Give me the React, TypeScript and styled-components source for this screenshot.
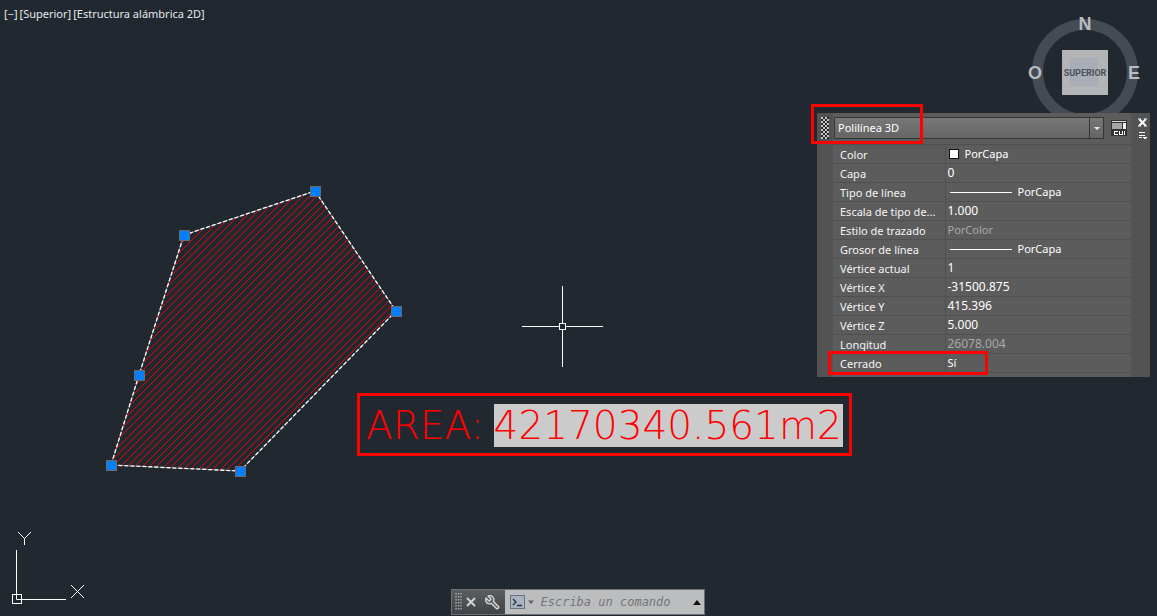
import React from "react";
import styled, { createGlobalStyle } from "styled-components";

const GlobalStyle = createGlobalStyle`
  * { box-sizing: border-box; }
  body { margin: 0; background: #212830; }
`;

const Workspace = styled.main`
  position: relative;
  min-height: 100vh;
  overflow: hidden;
  background: #212830;
  color: #f2f2f2;
  font-family: "Noto Sans", "Open Sans", sans-serif;
  font-size: 11px;
  line-height: 16px;
`;

const ViewportControls = styled.nav`
  display: flex;
  gap: 2px;
  padding: 6px 4px;
`;

const ViewportButton = styled.button`
  padding: 0;
  border: 0;
  background: none;
  color: #e6e8ea;
  font: inherit;
`;

const Drawing = styled.svg<{ $left: number; $top: number }>`
  position: absolute;
  left: ${(p) => p.$left}px;
  top: ${(p) => p.$top}px;
`;

const Ucs = styled.svg`
  position: absolute;
  left: 8px;
  bottom: 8px;
`;

const ViewCube = styled.svg`
  position: absolute;
  right: 15px;
  top: 12px;
  font-family: "Liberation Sans", sans-serif;
  font-weight: 700;
`;

const AreaNote = styled.p`
  position: absolute;
  left: 357px;
  top: 393px;
  display: flex;
  gap: 10px;
  margin: 0;
  padding: 8px 6px 6px;
  border: 3px solid #ff0000;
  color: #ff0000;
  font-family: "DejaVu Sans Light", "DejaVu Sans ExtraLight", Inter, sans-serif;
  font-size: 39px;
  font-weight: 200;
  line-height: 43px;
`;

const AreaField = styled.span`
  min-width: 349px;
  background: #cbcbcb;
`;

const Palette = styled.section`
  position: absolute;
  right: 7px;
  top: 113px;
  display: grid;
  grid-template-columns: 16px 298px 19px;
  background: #535353;
`;

const Grip = styled.div`
  display: flex;
  justify-content: center;
  padding-top: 4px;
`;

const PaletteBody = styled.div`
  padding-bottom: 4px;
  background: #5c5c5c;
`;

const PaletteHeader = styled.header`
  display: flex;
  align-items: center;
  gap: 7px;
  height: 31px;
  padding: 0 3px 2px 1px;
`;

const TypePicker = styled.div`
  position: relative;
  display: flex;
  width: 270px;
  height: 22px;
  border: 1px solid #363636;
  background: linear-gradient(#777777, #656565);

  svg {
    position: absolute;
    right: 0;
    top: 0;
    pointer-events: none;
  }
`;

const TypeSelect = styled.select`
  flex: 1;
  padding: 0 3px;
  border: 0;
  appearance: none;
  background: none;
  color: #ffffff;
  font: inherit;
`;

const IconButton = styled.button`
  display: flex;
  padding: 0;
  border: 0;
  background: none;
`;

const SideControls = styled.div`
  display: flex;
  flex-direction: column;
  align-items: center;
  gap: 4px;
  padding: 5px 0 0 3px;
`;

const PropertyTable = styled.table`
  width: 100%;
  border-collapse: collapse;
  table-layout: fixed;
  border-top: 1px solid #4f4f4f;
`;

const PropertyName = styled.th`
  width: 112px;
  height: 19px;
  padding: 2px 3px 0 7px;
  border-right: 1px solid #505050;
  border-bottom: 1px solid #505050;
  overflow: hidden;
  text-overflow: ellipsis;
  white-space: nowrap;
  text-align: left;
  font-weight: 400;
  color: #f4f4f4;
`;

const PropertyValue = styled.td<{ $muted?: boolean; $numeric?: boolean }>`
  height: 19px;
  padding: 0 0 0 2px;
  border-bottom: 1px solid #505050;
  color: ${(p) => (p.$muted ? "#a9a9a9" : "#ffffff")};
  font-size: ${(p) => (p.$numeric ? 12 : 11)}px;
`;

const ValueContent = styled.span`
  display: flex;
  align-items: center;
  gap: 6px;
`;

const Swatch = styled.span`
  width: 10px;
  height: 10px;
  margin-left: 1px;
  border: 1px solid #111111;
  background: #ffffff;
`;

const LineSample = styled.span`
  width: 62px;
  height: 1px;
  margin-left: 2px;
  background: #ffffff;
`;

const Highlight = styled.div<{ $left: number; $top: number; $width: number; $height: number }>`
  position: absolute;
  left: ${(p) => p.$left}px;
  top: ${(p) => p.$top}px;
  width: ${(p) => p.$width}px;
  height: ${(p) => p.$height}px;
  border: 3px solid #ff0000;
  pointer-events: none;
`;

const CommandDock = styled.footer`
  position: absolute;
  left: 0;
  right: 0;
  bottom: 1px;
  display: flex;
  justify-content: center;
  padding-right: 2px;
`;

const CommandBar = styled.form`
  display: flex;
  height: 26px;
  border: 1px solid #6c7075;
  background: #bcbdbf;
`;

const CommandTools = styled.div`
  display: flex;
  align-items: center;
  gap: 4px;
  width: 53px;
  padding-left: 3px;
  background: linear-gradient(#5b5d60, #414346);
`;

const ToolButtons = styled.div`
  display: flex;
  align-items: center;
  gap: 9px;
`;

const CommandEntry = styled.div`
  display: flex;
  align-items: center;
  gap: 4px;
  width: 199px;
  padding: 0 3px 0 5px;
`;

const CommandInput = styled.input`
  flex: 1;
  min-width: 0;
  padding: 0 3px;
  border: 0;
  outline: 0;
  background: none;
  color: #444444;
  font: italic 12px "DejaVu Sans Mono", monospace;

  &::placeholder { color: #737577; opacity: 1; }
`;

const vertices = [
  [315, 191],
  [396, 311],
  [240, 471],
  [111, 465],
  [139, 375],
  [184, 235],
];

const outline = vertices.map(([x, y]) => `${x - 100},${y - 180}`).join(" ");

function Parcel() {
  const hatch = [];
  for (let i = 0; i < 40; i++) {
    const c = Math.round(145 + i * 7.35);
    hatch.push(`M${c - 300} 300L${c} 0`);
  }
  return (
    <Drawing $left={100} $top={180} width="310" height="300" role="img" aria-label="Polilínea 3D">
      <clipPath id="parcel">
        <polygon points={outline} />
      </clipPath>
      <path d={hatch.join("")} stroke="#f80000" strokeWidth="0.9" clipPath="url(#parcel)" shapeRendering="crispEdges" />
      <polygon points={outline} fill="none" stroke="#6b7076" />
      <polygon points={outline} fill="none" stroke="#ffffff" strokeWidth="1.3" strokeDasharray="4 2" />
      {vertices.map(([x, y]) => (
        <rect key={`${x}-${y}`} x={x - 104.5} y={y - 184.5} width="10" height="10" fill="#007fff" stroke="#6b6b6b" />
      ))}
    </Drawing>
  );
}

function GripDots() {
  const rows = Array.from({ length: 11 }, (_, i) => i);
  return (
    <svg width="8" height="22" shapeRendering="crispEdges" aria-hidden="true">
      <rect width="8" height="22" fill="#2c2c2c" />
      {rows.map((r) => (
        <path
          key={r}
          d={r % 2 ? `M2 ${r * 2 + 1}h2M6 ${r * 2 + 1}h2` : `M0 ${r * 2 + 1}h2M4 ${r * 2 + 1}h2`}
          stroke="#c4c4c4"
          strokeWidth="2"
        />
      ))}
    </svg>
  );
}

type Property = { name: string; value: string; muted?: boolean; numeric?: boolean; sample?: "swatch" | "line" };

const properties: Property[] = [
  { name: "Color", value: "PorCapa", sample: "swatch" },
  { name: "Capa", value: "0", numeric: true },
  { name: "Tipo de línea", value: "PorCapa", sample: "line" },
  { name: "Escala de tipo de...", value: "1.000", numeric: true },
  { name: "Estilo de trazado", value: "PorColor", muted: true },
  { name: "Grosor de línea", value: "PorCapa", sample: "line" },
  { name: "Vértice actual", value: "1", numeric: true },
  { name: "Vértice X", value: "-31500.875", numeric: true },
  { name: "Vértice Y", value: "415.396", numeric: true },
  { name: "Vértice Z", value: "5.000", numeric: true },
  { name: "Longitud", value: "26078.004", numeric: true, muted: true },
  { name: "Cerrado", value: "Sí" },
];

function QuickProperties() {
  return (
    <Palette aria-label="Propiedades rápidas">
      <Grip>
        <GripDots />
      </Grip>
      <PaletteBody>
        <PaletteHeader>
          <TypePicker>
            <TypeSelect aria-label="Tipo de objeto">
              <option>Polilínea 3D</option>
            </TypeSelect>
            <svg width="14" height="20" aria-hidden="true">
              <path d="M.5 0v20" stroke="#363636" />
              <path d="M5 9h6l-3 3z" fill="#eeeeee" />
            </svg>
          </TypePicker>
          <IconButton aria-label="Personalizar CUI">
            <svg width="16" height="16" shapeRendering="crispEdges">
              <rect width="16" height="16" fill="#333333" />
              <rect x="1" y="1" width="14" height="1" fill="#d8d8d8" />
              <rect x="1" y="3" width="10" height="6" fill="#a5a5a5" />
              <rect x="12" y="3" width="3" height="6" fill="#f0f0f0" />
              <path d="M7 11.500h-3.500v3h3.500M8.500 11v3.500h3v-3.500M13.500 11v4" fill="none" stroke="#ffffff" />
            </svg>
          </IconButton>
        </PaletteHeader>
        <PropertyTable>
          <tbody>
            {properties.map((p) => (
              <tr key={p.name}>
                <PropertyName scope="row">{p.name}</PropertyName>
                <PropertyValue $muted={p.muted} $numeric={p.numeric}>
                  <ValueContent>
                    {p.sample === "swatch" && <Swatch />}
                    {p.sample === "line" && <LineSample />}
                    {p.value}
                  </ValueContent>
                </PropertyValue>
              </tr>
            ))}
          </tbody>
        </PropertyTable>
      </PaletteBody>
      <SideControls>
        <IconButton aria-label="Cerrar">
          <svg width="9" height="9">
            <path d="M1.500 1.500l6 6M7.500 1.500l-6 6" stroke="#ffffff" strokeWidth="2" />
            <path d="M0 1h3M6 1h3M0 8h3M6 8h3" stroke="#ffffff" />
          </svg>
        </IconButton>
        <IconButton aria-label="Opciones">
          <svg width="9" height="9" shapeRendering="crispEdges">
            <path d="M1 1.500h6M1 4.500h6M1 6.500h3" stroke="#ffffff" />
            <path d="M4 6h5l-2.500 2.500z" fill="#ffffff" />
          </svg>
        </IconButton>
      </SideControls>
      <Highlight $left={-6} $top={-9} $width={112} $height={40} />
      <Highlight $left={11} $top={238} $width={160} $height={24} />
    </Palette>
  );
}

function Command() {
  return (
    <CommandDock>
      <CommandBar onSubmit={(e) => e.preventDefault()}>
        <CommandTools>
          <svg width="7" height="20" aria-hidden="true">
            <path d="M1 1v18M3.500 1v18M6 1v18" stroke="#a0a2a5" strokeWidth="1.5" strokeDasharray="1.5 1.500" />
          </svg>
          <ToolButtons>
            <IconButton type="button" aria-label="Cerrar línea de comandos">
              <svg width="10" height="10">
                <path d="M1 1l8 8M9 1l-8 8" stroke="#d0d2d4" strokeWidth="2" />
              </svg>
            </IconButton>
            <IconButton type="button" aria-label="Personalizar">
              <svg width="15" height="15" viewBox="1 1 22 22">
                <g transform="matrix(-1 0 0 1 24 0)">
                  <path
                    d="M14.700 6.300a1 1 0 0 0 0 1.400l1.600 1.600a1 1 0 0 0 1.400 0l3.770-3.770a6 6 0 0 1-7.940 7.940l-6.910 6.910a2.120 2.120 0 0 1-3-3l6.910-6.910a6 6 0 0 1 7.940-7.940l-3.760 3.760z"
                    fill="#626568"
                    stroke="#d6d8da"
                    strokeWidth="2"
                    strokeLinejoin="round"
                  />
                </g>
              </svg>
            </IconButton>
          </ToolButtons>
        </CommandTools>
        <CommandEntry>
          <IconButton type="button" aria-label="Comandos recientes">
            <svg width="24" height="14">
              <rect x=".5" y=".5" width="14" height="13" fill="#a9b3c0" stroke="#667584" />
              <path d="M3 4l3 3-3 3M7 10.500h5" fill="none" stroke="#28323c" strokeWidth="1.300" />
              <path d="M18 5.500h6l-3 3.500z" fill="#5c5e60" />
            </svg>
          </IconButton>
          <CommandInput aria-label="Comando" placeholder="Escriba un comando" />
          <IconButton type="button" aria-label="Historial">
            <svg width="8" height="5">
              <path d="M0 5h8L4 0z" fill="#111111" />
            </svg>
          </IconButton>
        </CommandEntry>
      </CommandBar>
    </CommandDock>
  );
}

export default function App() {
  return (
    <Workspace>
      <GlobalStyle />
      <ViewportControls>
        <ViewportButton>[−]</ViewportButton>
        <ViewportButton>[Superior]</ViewportButton>
        <ViewportButton>[Estructura alámbrica 2D]</ViewportButton>
      </ViewportControls>

      <Parcel />

      <Drawing $left={522} $top={286} width="81" height="81" aria-hidden="true">
        <path d="M40.500 0v37M40.500 44v37M0 40.500h37M44 40.500h37" stroke="#ffffff" />
        <rect x="37.500" y="37.500" width="6" height="6" fill="none" stroke="#ffffff" />
      </Drawing>

      <AreaNote>
        <span>AREA:</span>
        <AreaField>42170340.561m2</AreaField>
      </AreaNote>

      <Ucs width="80" height="80" viewBox="8 528 80 80" fill="none" stroke="#ffffff" role="img" aria-label="Ejes X Y">
        <path d="M16.500 550v49.500H66" />
        <rect x="12.500" y="594.500" width="9" height="9" />
        <path d="M18 532l6.500 6.500 6.500-6.500M24.500 538.500v6.500M71 585l13 13M84 585l-13 13" />
      </Ucs>

      <ViewCube width="116" height="116" viewBox="1026 12 116 116">
        <circle cx="1085" cy="72" r="47.500" fill="none" stroke="#454b55" strokeWidth="11" />
        <rect x="1062" y="50" width="46" height="45" fill="#b3b4b6" />
        <rect x="1070" y="58" width="28" height="28" fill="#a8adb6" />
        <g fill="#b9bbbe" fontSize="18" textAnchor="middle">
          <text x="1085" y="30">N</text>
          <text x="1035" y="79">O</text>
          <text x="1134" y="79">E</text>
        </g>
        <text x="1085" y="76" fill="#4b5059" fontSize="9" fontFamily="Roboto, Liberation Sans, sans-serif" textAnchor="middle">
          SUPERIOR
        </text>
      </ViewCube>

      <QuickProperties />
      <Command />
    </Workspace>
  );
}
